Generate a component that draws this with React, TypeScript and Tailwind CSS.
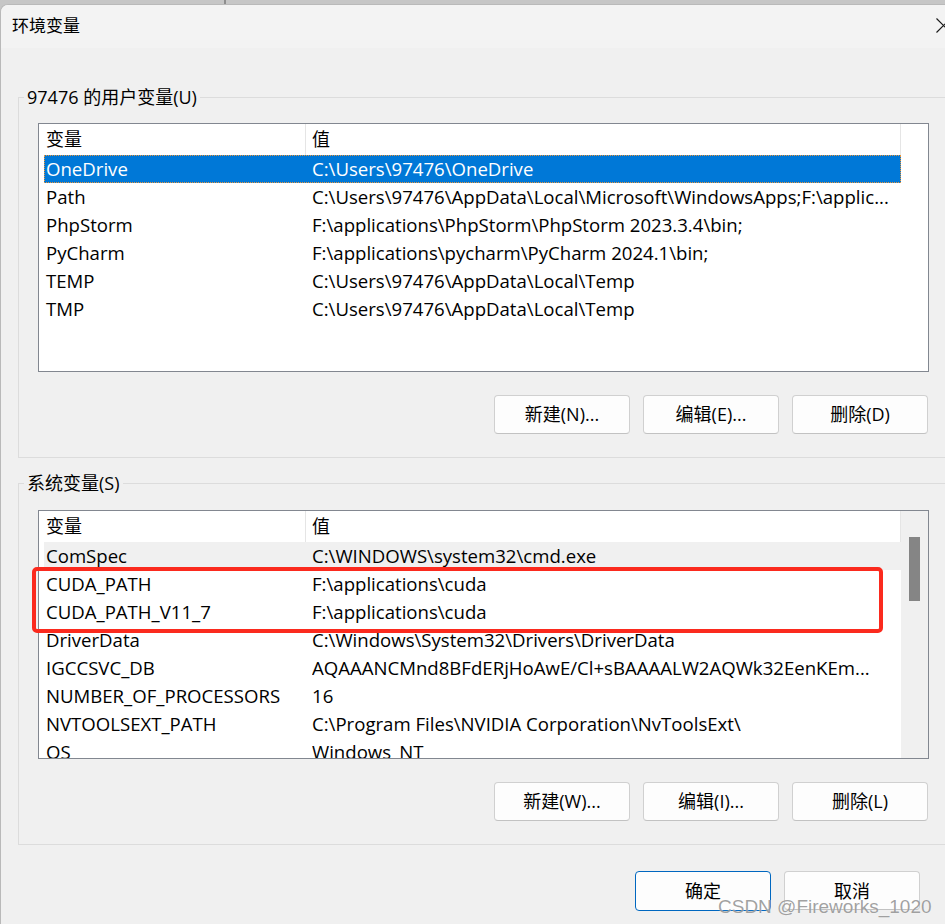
import React from "react";

type Row = { name: string; value: string; state?: "selected" | "hover" };

const userVars: Row[] = [
  { name: "OneDrive", value: "C:\\Users\\97476\\OneDrive", state: "selected" },
  { name: "Path", value: "C:\\Users\\97476\\AppData\\Local\\Microsoft\\WindowsApps;F:\\applic..." },
  { name: "PhpStorm", value: "F:\\applications\\PhpStorm\\PhpStorm 2023.3.4\\bin;" },
  { name: "PyCharm", value: "F:\\applications\\pycharm\\PyCharm 2024.1\\bin;" },
  { name: "TEMP", value: "C:\\Users\\97476\\AppData\\Local\\Temp" },
  { name: "TMP", value: "C:\\Users\\97476\\AppData\\Local\\Temp" },
];

const systemVars: Row[] = [
  { name: "ComSpec", value: "C:\\WINDOWS\\system32\\cmd.exe", state: "hover" },
  { name: "CUDA_PATH", value: "F:\\applications\\cuda" },
  { name: "CUDA_PATH_V11_7", value: "F:\\applications\\cuda" },
  { name: "DriverData", value: "C:\\Windows\\System32\\Drivers\\DriverData" },
  { name: "IGCCSVC_DB", value: "AQAAANCMnd8BFdERjHoAwE/Cl+sBAAAALW2AQWk32EenKEm..." },
  { name: "NUMBER_OF_PROCESSORS", value: "16" },
  { name: "NVTOOLSEXT_PATH", value: "C:\\Program Files\\NVIDIA Corporation\\NvToolsExt\\" },
  { name: "OS", value: "Windows_NT" },
];

function VarList({ rows, scrollbar }: { rows: Row[]; scrollbar?: boolean }) {
  return (
    <div className="flex h-[249px] w-[891px] overflow-hidden border border-[#828790] bg-white">
      <div className="flex w-[862px] flex-col">
        {/* column header */}
        <div className="flex h-[31px] shrink-0 items-center">
          <div className="w-[266px] pl-[7px]">变量</div>
          <div className="h-full w-px bg-[#e5e5e5]" />
          <div className="flex-1 pl-[6px]">值</div>
          <div className="h-full w-px bg-[#e5e5e5]" />
        </div>
        <div className="pl-[5px] text-[18.6px]">
          {rows.map((r) => (
            <div
              key={r.name}
              className={
                "flex h-[28px] items-center whitespace-nowrap " +
                (r.state === "selected"
                  ? "bg-[#0078d7] text-white outline-1 outline-dotted -outline-offset-1 outline-[#e8963c]"
                  : r.state === "hover"
                    ? "bg-[#f0f0f0]"
                    : "")
              }
            >
              <div className="w-[268px] pl-[2px]">{r.name}</div>
              <div className="flex-1 overflow-hidden">{r.value}</div>
            </div>
          ))}
        </div>
      </div>
      {scrollbar && (
        <div className="flex w-[27px] justify-center bg-[#f0f0f0] pt-[26px]">
          <div className="h-[64px] w-[11px] bg-[#858585]" />
        </div>
      )}
    </div>
  );
}

function WinButton({ children, primary }: { children: React.ReactNode; primary?: boolean }) {
  return (
    <button
      className={
        "flex w-[136px] items-center justify-center rounded-[4px] border bg-[#fdfdfd] " +
        (primary ? "h-[40px] border-[#0067c0]" : "h-[39px] border-[#d0d0d0] border-b-[#c2c2c2]")
      }
    >
      {children}
    </button>
  );
}

function GroupBox({
  title,
  rows,
  buttons,
  scrollbar,
  children,
}: {
  title: string;
  rows: Row[];
  buttons: string[];
  scrollbar?: boolean;
  children?: React.ReactNode;
}) {
  return (
    <fieldset className="ml-[17px] w-[934px] border border-[#dcdcdc] px-0 pb-[23px]">
      <legend className="ml-[5px] px-[3px] leading-[26px]">{title}</legend>
      <div className="relative px-[19px]">
        <div className={scrollbar ? "pt-[14px]" : "pt-[13px]"}>
          <VarList rows={rows} scrollbar={scrollbar} />
        </div>
        <div className="mt-[23px] flex w-[891px] justify-end gap-[13px] pr-[1px]">
          {buttons.map((b) => (
            <WinButton key={b}>{b}</WinButton>
          ))}
        </div>
        {children}
      </div>
    </fieldset>
  );
}

export default function App() {
  return (
    <div className="relative h-[924px] w-[945px] overflow-hidden bg-[#c6c6c6] font-['Open_Sans','Noto_Sans_CJK_SC',sans-serif] text-[18px] text-black">
      {/* sliver of the window behind */}
      <div className="flex h-[4px]">
        <div className="w-[224px]" />
        <div className="w-[2px] bg-[#8e8e8e]" />
      </div>

      <div className="h-[920px] w-[965px] overflow-hidden rounded-tl-[8px] border-l border-t border-[#b9b9b9] bg-[#f0f0f0]">
        {/* title bar */}
        <div className="flex h-[43px] items-center bg-[#f3f3f3] pb-[2px] pl-[11px]">
          <span className="text-[17px]">环境变量</span>
          <svg
            className="ml-auto mr-[14px]"
            width="15"
            height="15"
            viewBox="0 0 15 15"
            fill="none"
            stroke="#1b1b1b"
            strokeWidth="1.2"
          >
            <path d="M0.5 0.5 L14.5 14.5 M14.5 0.5 L0.5 14.5" />
          </svg>
        </div>

        <div className="pt-[36px]">
          <GroupBox
            title="97476 的用户变量(U)"
            rows={userVars}
            buttons={["新建(N)...", "编辑(E)...", "删除(D)"]}
          />

          <div className="mt-[12px]">
            <GroupBox
              title="系统变量(S)"
              rows={systemVars}
              buttons={["新建(W)...", "编辑(I)...", "删除(L)"]}
              scrollbar
            >
              {/* red annotation around the CUDA rows */}
              <div className="pointer-events-none absolute left-[13px] top-[71px] h-[66px] w-[851px] rounded-[5px] border-[4px] border-[#fb2a1e]" />
            </GroupBox>
          </div>

          <div className="mt-[26px] flex justify-end gap-[13px] pr-[45px]">
            <WinButton primary>确定</WinButton>
            <WinButton primary={false}>
              <span className="leading-none">取消</span>
            </WinButton>
          </div>
        </div>
      </div>

      {/* watermark */}
      <div className="pointer-events-none absolute left-[718px] top-[897px] font-['Liberation_Sans',sans-serif] text-[19px] leading-none text-[rgba(125,125,125,0.72)] [text-shadow:0_0_1px_rgba(255,255,255,0.8)]">
        CSDN @Fireworks_1020
      </div>
    </div>
  );
}
